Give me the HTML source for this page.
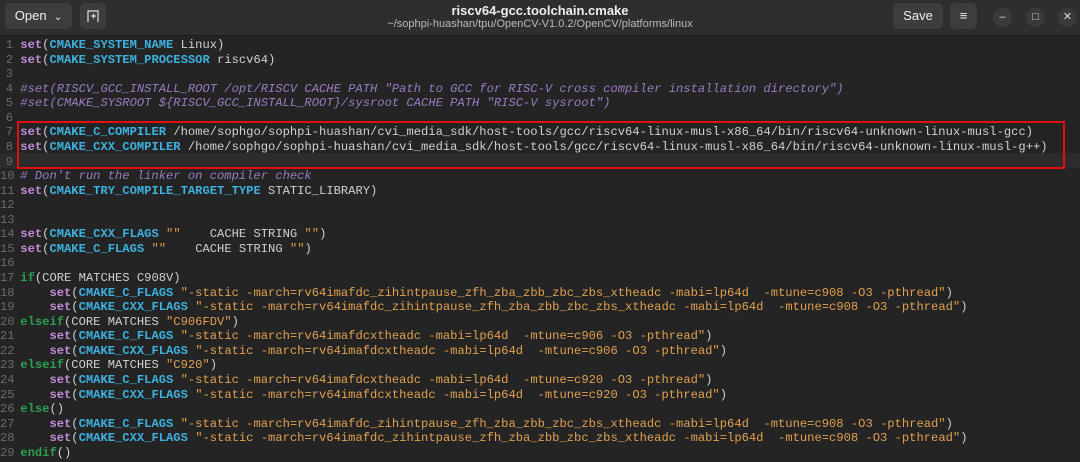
<!DOCTYPE html>
<html><head><meta charset="utf-8"><style>
body{margin:0;width:1080px;height:462px;background:#242424;overflow:hidden;font-family:"Liberation Sans",sans-serif;position:relative}
.hdr{position:absolute;left:0;top:0;width:1080px;height:35px;background:#2e2e2e;border-bottom:1px solid #1c1c1c}
.btn{position:absolute;background:#3d3d3d;border-radius:5px;color:#eee;font-size:13px;text-align:center;line-height:26px;height:26px;top:3px}
.circ{position:absolute;top:8px;width:19px;height:19px;border-radius:50%;background:#3a3a3a;color:#ddd;font-size:11px;text-align:center;line-height:19px}
.title{position:absolute;left:0;width:1080px;text-align:center;color:#eee}
pre{position:absolute;left:0;top:38px;margin:0;font-family:"Liberation Mono",monospace;font-size:12.15px;line-height:14.57px;color:#d0d0d0}
.ln{color:#6a6a6a;display:inline-block;width:13px;text-align:right;font-weight:normal}
.k{color:#c38cd8;font-weight:bold}.v{color:#3db2e0;font-weight:bold}.s{color:#e0a050}.c{color:#9a7cc0;font-style:italic}.g{color:#2aa050;font-weight:bold}
.cur{position:absolute;left:0;top:153px;width:1080px;height:14.6px;background:#2c2c2c}
.box{position:absolute;left:17px;top:121px;width:1044px;height:44px;border:2px solid #e01010}
</style></head><body>
<div class="hdr">
<div class="btn" style="left:5px;width:67px">Open&nbsp;&nbsp;<span style="font-size:10px">&#8964;</span></div>
<div class="btn" style="left:80px;width:26px"><svg width="14" height="12" viewBox="0 0 14 12" style="margin-top:7px"><path d="M2 12V1h10v11M5 6h5M7.5 3.5v5" stroke="#ddd" fill="none" stroke-width="1.2"/></svg></div>
<div class="title" style="top:3px;font-weight:bold;font-size:13px">riscv64-gcc.toolchain.cmake</div>
<div class="title" style="top:18px;font-size:11px;color:#bbb">~/sophpi-huashan/tpu/OpenCV-V1.0.2/OpenCV/platforms/linux</div>
<div class="btn" style="left:893px;width:50px">Save</div>
<div class="btn" style="left:950px;width:27px">&#8801;</div>
<div class="circ" style="left:993px">&#8211;</div>
<div class="circ" style="left:1026px">&#9633;</div>
<div class="circ" style="left:1058px">&#10005;</div>
</div>
<div class="cur"></div>
<pre><span class="ln">1</span> <span class="k">set</span>(<span class="v">CMAKE_SYSTEM_NAME</span> Linux)
<span class="ln">2</span> <span class="k">set</span>(<span class="v">CMAKE_SYSTEM_PROCESSOR</span> riscv64)
<span class="ln">3</span>
<span class="ln">4</span> <span class="c">#set(RISCV_GCC_INSTALL_ROOT /opt/RISCV CACHE PATH "Path to GCC for RISC-V cross compiler installation directory")</span>
<span class="ln">5</span> <span class="c">#set(CMAKE_SYSROOT ${RISCV_GCC_INSTALL_ROOT}/sysroot CACHE PATH "RISC-V sysroot")</span>
<span class="ln">6</span>
<span class="ln">7</span> <span class="k">set</span>(<span class="v">CMAKE_C_COMPILER</span> /home/sophgo/sophpi-huashan/cvi_media_sdk/host-tools/gcc/riscv64-linux-musl-x86_64/bin/riscv64-unknown-linux-musl-gcc)
<span class="ln">8</span> <span class="k">set</span>(<span class="v">CMAKE_CXX_COMPILER</span> /home/sophgo/sophpi-huashan/cvi_media_sdk/host-tools/gcc/riscv64-linux-musl-x86_64/bin/riscv64-unknown-linux-musl-g++)
<span class="ln">9</span>
<span class="ln">10</span> <span class="c"># Don't run the linker on compiler check</span>
<span class="ln">11</span> <span class="k">set</span>(<span class="v">CMAKE_TRY_COMPILE_TARGET_TYPE</span> STATIC_LIBRARY)
<span class="ln">12</span>
<span class="ln">13</span>
<span class="ln">14</span> <span class="k">set</span>(<span class="v">CMAKE_CXX_FLAGS</span> <span class="s">""</span>    CACHE STRING <span class="s">""</span>)
<span class="ln">15</span> <span class="k">set</span>(<span class="v">CMAKE_C_FLAGS</span> <span class="s">""</span>    CACHE STRING <span class="s">""</span>)
<span class="ln">16</span>
<span class="ln">17</span> <span class="g">if</span>(CORE MATCHES C908V)
<span class="ln">18</span>     <span class="k">set</span>(<span class="v">CMAKE_C_FLAGS</span> <span class="s">"-static -march=rv64imafdc_zihintpause_zfh_zba_zbb_zbc_zbs_xtheadc -mabi=lp64d  -mtune=c908 -O3 -pthread"</span>)
<span class="ln">19</span>     <span class="k">set</span>(<span class="v">CMAKE_CXX_FLAGS</span> <span class="s">"-static -march=rv64imafdc_zihintpause_zfh_zba_zbb_zbc_zbs_xtheadc -mabi=lp64d  -mtune=c908 -O3 -pthread"</span>)
<span class="ln">20</span> <span class="g">elseif</span>(CORE MATCHES <span class="s">"C906FDV"</span>)
<span class="ln">21</span>     <span class="k">set</span>(<span class="v">CMAKE_C_FLAGS</span> <span class="s">"-static -march=rv64imafdcxtheadc -mabi=lp64d  -mtune=c906 -O3 -pthread"</span>)
<span class="ln">22</span>     <span class="k">set</span>(<span class="v">CMAKE_CXX_FLAGS</span> <span class="s">"-static -march=rv64imafdcxtheadc -mabi=lp64d  -mtune=c906 -O3 -pthread"</span>)
<span class="ln">23</span> <span class="g">elseif</span>(CORE MATCHES <span class="s">"C920"</span>)
<span class="ln">24</span>     <span class="k">set</span>(<span class="v">CMAKE_C_FLAGS</span> <span class="s">"-static -march=rv64imafdcxtheadc -mabi=lp64d  -mtune=c920 -O3 -pthread"</span>)
<span class="ln">25</span>     <span class="k">set</span>(<span class="v">CMAKE_CXX_FLAGS</span> <span class="s">"-static -march=rv64imafdcxtheadc -mabi=lp64d  -mtune=c920 -O3 -pthread"</span>)
<span class="ln">26</span> <span class="g">else</span>()
<span class="ln">27</span>     <span class="k">set</span>(<span class="v">CMAKE_C_FLAGS</span> <span class="s">"-static -march=rv64imafdc_zihintpause_zfh_zba_zbb_zbc_zbs_xtheadc -mabi=lp64d  -mtune=c908 -O3 -pthread"</span>)
<span class="ln">28</span>     <span class="k">set</span>(<span class="v">CMAKE_CXX_FLAGS</span> <span class="s">"-static -march=rv64imafdc_zihintpause_zfh_zba_zbb_zbc_zbs_xtheadc -mabi=lp64d  -mtune=c908 -O3 -pthread"</span>)
<span class="ln">29</span> <span class="g">endif</span>()
</pre>
<div class="box"></div>
</body></html>
